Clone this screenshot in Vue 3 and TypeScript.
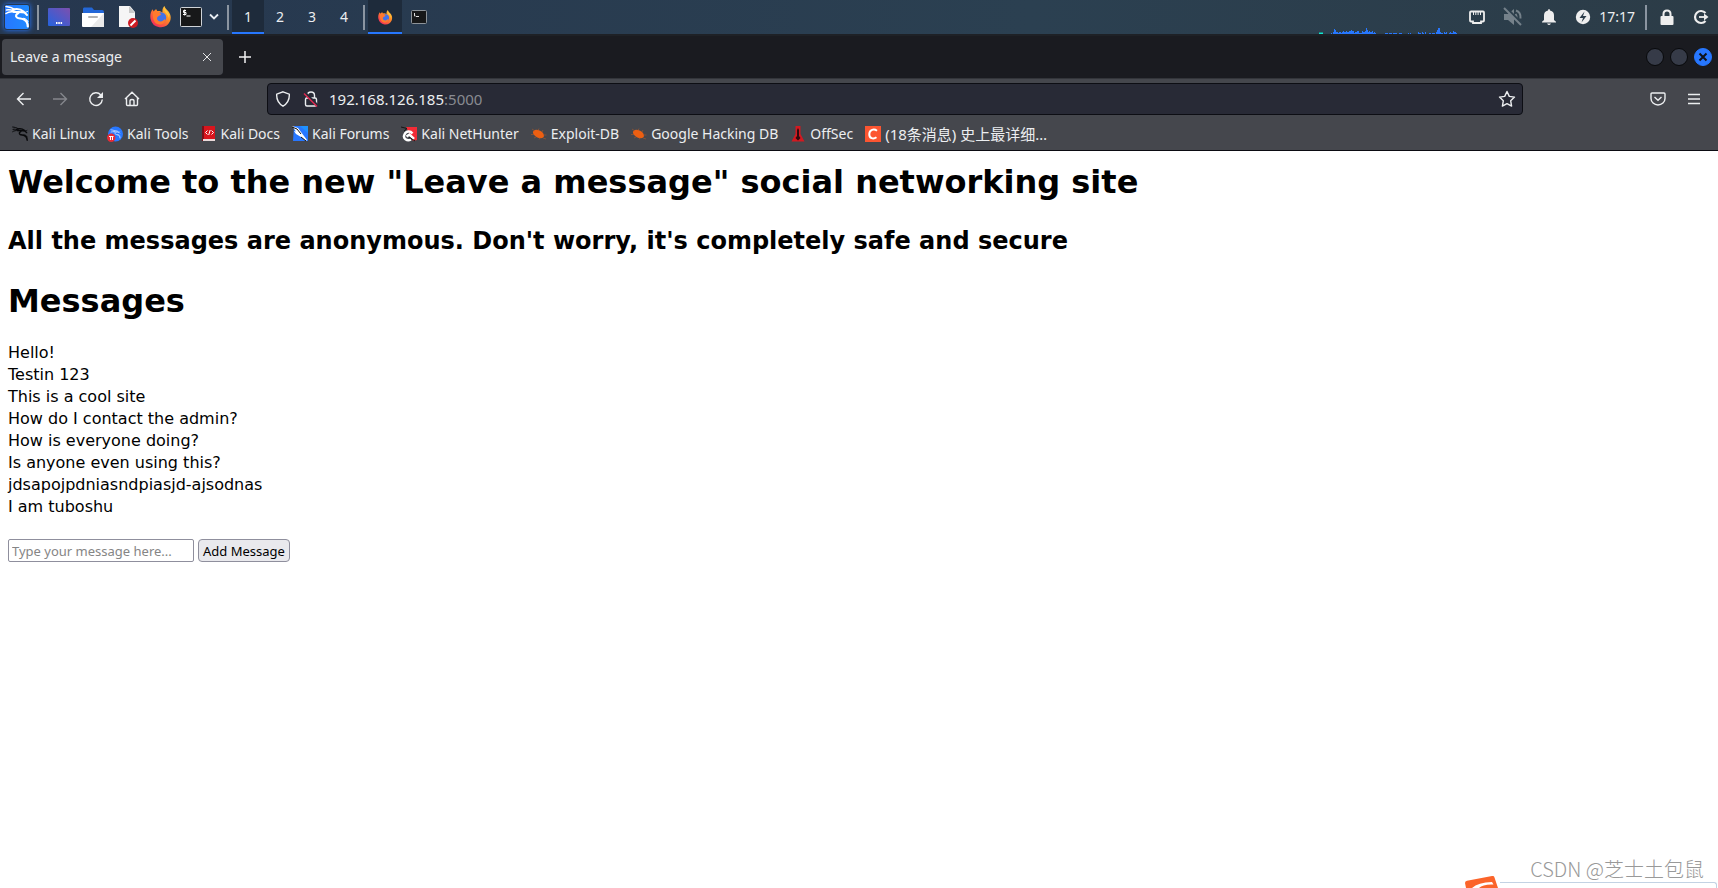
<script setup lang="ts">
import { ref } from 'vue'

interface Bookmark {
  label: string
  icon: string
}

const workspaces = [1, 2, 3, 4]
const activeWorkspace = ref(1)

const bookmarks: Bookmark[] = [
  { label: 'Kali Linux', icon: 'dragon' },
  { label: 'Kali Tools', icon: 'tools' },
  { label: 'Kali Docs', icon: 'docs' },
  { label: 'Kali Forums', icon: 'forums' },
  { label: 'Kali NetHunter', icon: 'nethunter' },
  { label: 'Exploit-DB', icon: 'bug' },
  { label: 'Google Hacking DB', icon: 'bug' },
  { label: 'OffSec', icon: 'offsec' },
  { label: '(18条消息) 史上最详细…', icon: 'csdn' },
]

const messages = ref<string[]>([
  'Hello!',
  'Testin 123',
  'This is a cool site',
  'How do I contact the admin?',
  'How is everyone doing?',
  'Is anyone even using this?',
  'jdsapojpdniasndpiasjd-ajsodnas',
  'I am tuboshu',
])
const draft = ref('')

function addMessage(): void {
  const text = draft.value.trim()
  if (!text) return
  messages.value.push(text)
  draft.value = ''
}

const cpuLoad = [1, 0, 2, 5, 4, 2, 2, 1, 2, 2, 1, 2, 3, 2, 2, 3, 2, 2, 3, 3, 4, 3, 3, 1, 2, 2, 3, 3, 1, 1, 1, 3, 2, 2, 3, 6, 4, 2, 3, 2, 2, 3, 1, 2, 1, 0, 0, 0, 0, 0, 0, 0, 0, 0, 1, 1, 1, 0, 1, 1, 1, 0, 1, 1, 1, 1, 0, 0, 1, 1, 1, 0, 0, 0, 0, 0, 0, 1, 0, 1, 0, 0, 0, 0, 0, 0, 0, 2, 1, 1, 0, 2, 1, 0, 2, 0, 0, 0, 1, 1, 0, 1, 1, 1, 0, 2, 4, 6, 6, 2, 1, 1, 0, 2, 1, 2, 0, 0, 1, 2, 1, 1, 3, 2, 2, 1]
</script>

<template>
  <div class="desktop">
    <svg class="defs" width="0" height="0" aria-hidden="true">
      <defs>
        <linearGradient id="kaliBlue" x1="0" y1="0" x2="1" y2="0"><stop stop-color="#2777ff" /><stop offset="1" stop-color="#1f8bff" /></linearGradient>
        <linearGradient id="deskGrad" x1="0" y1="1" x2="1" y2="0"><stop stop-color="#2463e0" /><stop offset="1" stop-color="#7d4fae" /></linearGradient>
        <linearGradient id="foxGrad" x1="1" y1="0" x2="0.2" y2="1"><stop stop-color="#ffe14a" /><stop offset="0.45" stop-color="#ff8a24" /><stop offset="1" stop-color="#f4265f" /></linearGradient>
        <symbol id="dragon" viewBox="0 0 24 24">
          <g fill="none" stroke="currentColor" stroke-linecap="round" stroke-linejoin="round">
            <path stroke-width="1.500" d="M1 1.500c3 .2 6 1 9 3M1.500 5c3-.6 5 0 7.500 1M1 8.500C3 7 6 6.500 9 7" />
            <path stroke-width="2" d="M8 4.500c4-.8 8-.3 10.500 2L22 10M9 7c4 0 7-.5 10.500.5" />
            <path stroke-width="2.200" d="M13.500 8c-2.500 1-3.200 3-1.500 4.500 1.500 1.200 4 .8 6.500 1.800 3 1.200 4.200 3.500 4.300 7.200" />
            <path stroke-width="1" d="M20 7.500l2.500-1M17 13.500c2.500-.8 4.500.5 6 3" />
          </g>
        </symbol>
        <symbol id="firefox" viewBox="0 0 22 22">
          <path fill="url(#foxGrad)" d="M14.500 0c.5 2.500 2 3.300 4 5.500 2.300 2.700 2.800 6.600 1.500 9.800A10.300 10.300 0 0 1 .6 13C-.1 9.500.5 6 2.700 3.200l.8 2.300c1-.8 1.600-1.900 2.800-2.200L7.200 5c2.700-.3 4 .3 5.300 1.500-.3-3 .3-5 2-6.500z" />
          <circle cx="11" cy="11.500" r="5.200" fill="#4272e8" />
          <path fill="#ff792e" d="M3 6c3-1 5.500-.5 7.800 2 1 .8-1.800 1.600-3 2.700-1.600 1.500-.4 4 1.600 4.500 2.500.7 4.500-.8 5.500-2.200 1 2.500-1.500 5.600-5 5.600C5 18.500 2 14 3 6z" />
          <path fill="#ffc83d" d="M14.500 1c.5 4 5.500 5.500 4.500 11-.4-2-1.300-3-2.500-4.500C15 5.500 13.500 4 14.500 1z" />
        </symbol>
      </defs>
    </svg>

    <header class="panel">
      <div class="panel-left">
        <button class="menu-btn" aria-label="Applications">
          <svg width="26" height="26" viewBox="0 0 26 26"><rect x="1" y="1" width="24" height="24" rx="2" fill="url(#kaliBlue)" /><use href="#dragon" x="1" y="1" width="24" height="24" color="#fff" /></svg>
        </button>
        <i class="sep"></i>
        <div class="launchers">
          <button aria-label="Show desktop"><svg width="22" height="22"><rect y="2" width="22" height="18" rx="1" fill="url(#deskGrad)" /><path stroke="#fff" stroke-width="2" stroke-dasharray="1.500 .8" d="M8 17h6.500" /></svg></button>
          <button aria-label="Files"><svg width="22" height="22"><path fill="#2367d8" d="M2 1.500h8l2 2.500h8q2 0 2 2v4H1V3q0-1.500 1-1.500z" /><path fill="#fff" d="M0 7h22v13q0 1-1 1H1q-1 0-1-1z" /><path fill="#eaeaea" d="M22 7v14H9z" /><path stroke="#b3b3b3" stroke-width="2" stroke-linecap="round" d="M7 11h8" /></svg></button>
          <button aria-label="Text editor"><svg width="22" height="22"><path fill="#f5f5f5" d="M3 0h11l5 6v15H3z" /><path fill="#c9c9c9" d="M13 0l6 7h-6z" /><circle cx="17" cy="17" r="5" fill="#cd1c24" /><path stroke="#fff" stroke-width="2" d="M14.500 19.500l5-5" /></svg></button>
          <button aria-label="Firefox"><svg width="22" height="22"><use href="#firefox" width="22" height="22" /></svg></button>
        </div>
        <div class="terminal">
          <button aria-label="Terminal"><svg width="22" height="22"><rect x=".5" y="1.500" width="21" height="19" rx="1" fill="#171819" stroke="#cfd3d8" /><path fill="none" stroke="#fff" d="M6 4.500H3.500v2H6v2H3M4.700 3.500v6M6.500 10h4" /></svg></button>
          <button aria-label="More terminals"><svg width="10" height="8"><path d="M1 1.500l4 4 4-4" fill="none" stroke="#e8edf2" stroke-width="1.800" /></svg></button>
        </div>
        <i class="sep"></i>
        <nav class="spaces" aria-label="Workspaces">
          <button v-for="n in workspaces" :key="n" :class="{ active: n === activeWorkspace }" @click="activeWorkspace = n">{{ n }}</button>
        </nav>
        <i class="sep"></i>
        <div class="tasks">
          <button class="active" aria-label="Firefox window"><svg width="15" height="15"><use href="#firefox" width="15" height="15" /></svg></button>
          <button aria-label="Terminal window"><svg width="16" height="14"><rect x=".5" y=".5" width="15" height="13" rx="1" fill="#171819" stroke="#8d9399" /><path fill="none" stroke="#dedede" d="M3.500 3v3h1M5 6.500h3" /></svg></button>
        </div>
      </div>
      <div class="panel-right">
        <svg class="graph" width="140" height="8" viewBox="0 0 140 8" shape-rendering="crispEdges">
          <rect y="6" width="4" height="1" fill="#1b8c86" /><rect y="7" width="4" height="1" fill="#12e8d0" />
          <rect v-for="(v, i) in cpuLoad" :key="i" :x="12 + i" :y="8 - v" width="1" :height="v" fill="#2777ff" />
        </svg>
        <button aria-label="Network"><svg width="16" height="16"><path d="M2 2.500h12q1 0 1 1v8q0 1-1 1h-2v1.500H4v-1.500H2q-1 0-1-1v-8q0-1 1-1z" fill="none" stroke="#eee" stroke-width="1.800" /><path d="M4.500 3v3M6.800 3v3M9.100 3v3M11.500 3v3" stroke="#eee" /></svg></button>
        <button aria-label="Volume muted"><svg width="20" height="20" stroke="#75818a" fill="none" stroke-width="2"><path fill="#75818a" stroke="none" d="M1 7h4l6-5v16l-6-5H1z" /><path d="M12.500 7q2 3 0 6M13 3.500q5 1.500 4.500 8" /><path stroke="#2d3f4d" stroke-width="3" d="M2 0l18 18" /><path d="M1 1l17 17" /></svg></button>
        <button aria-label="Notifications"><svg width="16" height="16"><path fill="#eee" d="M8 0q1 0 1 1.500c3 .7 4 2.500 4 5V11l2 1.800V13.500H1V12.800L3 11V6.500c0-2.500 1-4.300 4-5Q7 0 8 0zM6 14.500h4Q8 17.500 6 14.500z" /></svg></button>
        <button aria-label="Power"><svg width="16" height="16"><circle cx="8" cy="8" r="7.200" fill="#eee" /><path fill="#2d3d4a" d="M9.500 2.500L4.500 9H8l-1.500 4.500 5-6.500H8z" /></svg></button>
        <time class="clock">17:17</time>
        <i class="sep"></i>
        <button aria-label="Lock screen"><svg width="16" height="16"><rect x="1.500" y="7" width="13" height="9" rx="1" fill="#eee" /><path d="M4.500 8V5q0-3.500 3.500-3.500T11.500 5v3" fill="none" stroke="#eee" stroke-width="2" /></svg></button>
        <button aria-label="Log out"><svg width="16" height="16" fill="none" stroke="#eee" stroke-width="2.200"><path d="M12.500 4A6 6 0 1 0 12.500 12" /><path stroke-width="1.800" d="M6 8h6" /><path fill="#eee" stroke="none" d="M11 4.500L15.500 8 11 11.500z" /></svg></button>
      </div>
    </header>

    <div class="tabbar">
      <div class="tab"><span>Leave a message</span><button aria-label="Close tab"><svg width="10" height="10"><path d="M1 1l8 8M9 1L1 9" stroke="#e3e4e6" /></svg></button></div>
      <button class="newtab" aria-label="New tab"><svg width="14" height="14"><path d="M7 1v12M1 7h12" stroke="#f2f2f2" stroke-width="1.500" /></svg></button>
      <div class="window-btns">
        <button aria-label="Minimize"></button><button aria-label="Maximize"></button>
        <button class="close" aria-label="Close"><svg width="10" height="10"><path d="M1.500 1.500l7 7M8.500 1.500l-7 7" stroke="#10131a" stroke-width="2" /></svg></button>
      </div>
    </div>

    <div class="chrome">
      <div class="navbar">
        <div class="nav-btns">
          <button aria-label="Back"><svg class="line" width="16" height="16"><path d="M15 8H2M7.500 2L1.500 8l6 6" /></svg></button>
          <button class="dim" aria-label="Forward"><svg class="line" width="16" height="16"><path d="M1 8h13M8.500 2l6 6-6 6" /></svg></button>
          <button aria-label="Reload"><svg class="line" width="16" height="16"><path d="M12.800 4A6.300 6.300 0 1 0 14.300 8.500" /><path fill="currentColor" stroke="none" d="M15 1v6H9z" /></svg></button>
          <button aria-label="Home"><svg class="line" width="16" height="16"><path d="M1 8l7-6.700L15 8M2.500 7v6.500q0 1 1 1h9q1 0 1-1V7M6 14V10q0-1.500 2-1.500T10 10v4" /></svg></button>
        </div>
        <div class="urlbar">
          <svg class="line" width="16" height="16"><path d="M8 .8l6.300 2.400c.3 5-1.500 9-6.300 12C3.200 12.200 1.400 8.200 1.700 3.200z" /></svg>
          <svg class="line" width="16" height="16"><path d="M4.500 7V4.500Q4.500 1 8 1t3.500 3.500V7" /><rect x="2.500" y="7" width="11" height="8" rx="1.500" /><path stroke="#282a36" stroke-width="3" d="M2 2l13 13" /><path stroke="#e22850" d="M1 2.500L14 15.500" /></svg>
          <span class="url">192.168.126.185<em>:5000</em></span>
          <button aria-label="Bookmark page"><svg class="line" width="18" height="18"><path stroke-linejoin="round" d="M9 1.500l2.300 4.900 5.200.7-3.800 3.700.9 5.300L9 13.600l-4.600 2.500.9-5.300L1.500 7.100l5.200-.7z" /></svg></button>
        </div>
        <div class="nav-end">
          <button aria-label="Pocket"><svg class="line" width="16" height="16"><path d="M2 2h12q1 0 1 1v4.500a7 6.500 0 0 1-14 0V3q0-1 1-1z" /><path d="M4.500 6L8 9.300 11.500 6" /></svg></button>
          <button aria-label="Menu"><svg class="line" width="14" height="14"><path d="M1 2.500h12M1 7h12M1 11.500h12" /></svg></button>
        </div>
      </div>
      <nav class="bookmarks" aria-label="Bookmarks">
        <a v-for="b in bookmarks" :key="b.label" href="#" :class="b.icon">
          <svg width="16" height="16" viewBox="0 0 16 16">
            <use v-if="b.icon === 'dragon'" href="#dragon" width="16" height="16" color="#08090b" />
            <template v-else-if="b.icon === 'tools'"><circle cx="8.500" cy="8" r="7.500" fill="#2777ff" /><use href="#dragon" x="3" y="3" width="11" height="10" color="#c9dcff" /><circle cx="4.200" cy="11.800" r="4.200" fill="#e52b36" /><path stroke="#fff" fill="none" d="M2 10.500h4.500M3.500 10.500v3.500M5.500 10.500v3.500" /></template>
            <template v-else-if="b.icon === 'docs'"><path fill="#7c1018" d="M1 0h2v15H1z" /><path fill="#d9151d" d="M3 0h11v13H3z" /><path fill="#e9d9da" d="M2 13h12v2H2z" /><path stroke="#fff" fill="none" d="M6.500 4.500L4.500 6.500l2 2M10.500 4.500l2 2-2 2M9.200 4l-1.500 5" /></template>
            <template v-else-if="b.icon === 'forums'"><path fill="#2777ff" d="M2 0h14v15H1z" /><path fill="#1f92ff" d="M8 0h8v7z" /><path fill="#fff" d="M0 0l6 2 3 4 6 8-1 1-5-4-5-3-2-3 2 .5z" /><path stroke="#111" fill="none" d="M0 1l5 2 4 5M9 11l5 4" /></template>
            <template v-else-if="b.icon === 'nethunter'"><path fill="#f22b36" d="M5 1h11v13l-4 1z" /><path fill="none" stroke="#fff" stroke-width="2.500" d="M13 13L8.500 8.500 5.500 10.500M10 13.500c-4 2-8.500-1-6.500-5s6-3.500 8-1" /><path stroke="#151515" fill="none" d="M0 1l6 1.500L3 5M8 11l6 4" /></template>
            <template v-else-if="b.icon === 'bug'"><ellipse cx="7.500" cy="8" rx="6" ry="3.600" transform="rotate(28 7.500 8)" fill="#ec5f12" /><path stroke="#a8592c" stroke-width=".6" fill="none" d="M1 3l3 2M0 8.500h3M3 12l2-1M8 2.500l-1 2M12 4l-1 2M15.500 9H12M15 13l-3-1M8 13.500l1-2" /></template>
            <template v-else-if="b.icon === 'offsec'"><path fill="#d31920" d="M5.500 0h5v8l4 7.500h-13l4-7.500z" /><path fill="#310a0d" d="M7 4l1-2 1 2v6l1.500 2L8 14.500 5.500 12 7 10z" /></template>
            <template v-else><path fill="#fc5531" d="M0 0h16v16H0z" /><path fill="none" stroke="#fff" stroke-width="2" d="M12 4.800C9 2.500 4.500 3.500 4.300 8s4 5.500 7.200 3.300" /></template>
          </svg>
          <span>{{ b.label }}</span>
        </a>
      </nav>
    </div>

    <main class="page">
      <h1>Welcome to the new "Leave a message" social networking site</h1>
      <h2>All the messages are anonymous. Don't worry, it's completely safe and secure</h2>
      <h1>Messages</h1>
      <div class="messages"><div v-for="(m, i) in messages" :key="i">{{ m }}</div></div>
      <form @submit.prevent="addMessage">
        <input v-model="draft" type="text" aria-label="Message" placeholder="Type your message here..." />
        <button type="submit">Add Message</button>
      </form>
      <div class="watermark">CSDN @芝士土包鼠</div>
      <div class="popup">
        <svg width="36" height="12"><path fill="#fb642a" d="M1 7q0-2 2-2.300L28 0q2-.4 2.500 1.500L34 12H2z" /><path fill="#fff" d="M8 12q6-5.500 20-6l1.500 2.500Q19 8 15 12z" /></svg>
        <i></i>
      </div>
    </main>
  </div>
</template>

<style>
body {
  margin: 0;
}
</style>

<style scoped>
.desktop {
  position: relative;
  display: flex;
  flex-direction: column;
  min-height: 100vh;
  overflow: hidden;
  background: #fff;
  font: 15px/20px "Noto Sans", "Noto Sans CJK SC", sans-serif;
  color: #eceef0;
}
.defs { position: absolute; }
button {
  padding: 0;
  border: 0;
  background: none;
  color: inherit;
  font: inherit;
}
svg { display: block; flex: none; }
.line {
  fill: none;
  stroke: currentColor;
  stroke-width: 1.4;
}
.panel {
  display: flex;
  justify-content: space-between;
  height: 34px;
  background: linear-gradient(90deg, #26374f, #2b4051 60%, #2c3c47);
  border-bottom: 2px solid #1e2126;
}
.panel-left, .panel-right, .launchers, .terminal, .spaces, .tasks {
  display: flex;
  align-items: center;
}
.panel-left { padding-left: 4px; }
.menu-btn { box-shadow: 0 0 5px #2777ff; border-radius: 3px; }
.sep {
  width: 2px;
  height: 25px;
  background: #8b95a1;
}
.menu-btn + .sep { margin: 0 9px 0 7px; }
.launchers { gap: 12px; }
.terminal { gap: 7px; margin: 0 8px; }
.spaces { margin: 0 3px; align-self: stretch; }
.spaces button {
  width: 32px;
  height: 34px;
  font-size: 14px;
}
.spaces .active, .tasks .active {
  background: #1e2b3b;
  box-shadow: inset 0 -2px #2777ff;
}
.tasks { margin-left: 3px; align-self: stretch; }
.tasks button {
  display: grid;
  place-items: center;
  width: 34px;
  height: 34px;
}
.panel-right { padding-right: 9px; gap: 18px; }
.graph { align-self: flex-end; margin-right: -8px; }
.panel-right .clock { font-size: 14px; margin: 0 -8px 0 -10px; }
.panel-right .sep { margin-right: -6px; }
.tabbar {
  display: flex;
  align-items: center;
  height: 42px;
  padding: 0 6px 0 2px;
  background: #1a1b20;
}
.tab {
  box-sizing: border-box;
  display: flex;
  align-items: center;
  justify-content: space-between;
  width: 221px;
  height: 36px;
  padding: 0 11px 0 8px;
  border-radius: 4px;
  background: #45474d;
  font-size: 14px;
}
.newtab { margin-left: 15px; }
.window-btns {
  display: flex;
  gap: 6px;
  margin-left: auto;
}
.window-btns button {
  box-sizing: border-box;
  display: grid;
  place-items: center;
  width: 18px;
  height: 18px;
  border: 1px solid #08090b;
  border-radius: 50%;
  background: #363b48;
}
.window-btns .close { background: #2777ff; border-color: #2777ff; }
.chrome {
  background: #45474d;
  border-bottom: 1px solid #0b0b12;
  border-top: 1px solid #33353a;
}
.navbar {
  display: flex;
  align-items: center;
  height: 39px;
  padding: 0 17px 0 16px;
}
.nav-btns { display: flex; gap: 20px; width: 251px; flex: none; }
.dim { color: #85878c; }
.urlbar {
  box-sizing: border-box;
  display: flex;
  flex: 1;
  align-items: center;
  gap: 12px;
  height: 32px;
  padding: 0 6px 0 7px;
  border: 1px solid #0d0e14;
  border-radius: 4px;
  background: #282a36;
}
.url { flex: 1; margin-left: -2px; }
.url em { font-style: normal; color: #888a91; }
.nav-end {
  display: flex;
  align-items: center;
  justify-content: flex-end;
  gap: 21px;
  width: 178px;
  flex: none;
}
.bookmarks {
  display: flex;
  align-items: center;
  gap: 12px;
  height: 32px;
  padding: 0 12px;
  white-space: nowrap;
  font-size: 14px;
}
.bookmarks a {
  display: flex;
  align-items: center;
  gap: 4px;
  color: inherit;
  text-decoration: none;
}
.bookmarks .csdn { font-size: 15px; }
.page {
  position: relative;
  flex: 1;
  padding: 11px 8px;
  color: #000;
  font: 16px/22px "DejaVu Sans", sans-serif;
}
h1 { margin: 0 0 21px; font-size: 32px; line-height: 40px; }
h2 { margin: 0 0 22px; font-size: 24px; line-height: 36px; }
form {
  display: flex;
  gap: 4px;
  margin-top: 21px;
}
form input, form button {
  box-sizing: border-box;
  height: 23px;
  border: 1px solid #8f8f9d;
  font: 13px/18px "Noto Sans", sans-serif;
}
form input {
  width: 186px;
  padding: 0 3px;
  border-radius: 2px;
  background: #fff;
}
form input::placeholder { color: #858585; opacity: 1; }
form button {
  padding: 0 4px;
  border-radius: 4px;
  background: #e9e9ed;
  color: #000;
}
.watermark {
  position: absolute;
  right: 14px;
  bottom: 5px;
  color: #999;
  font: 300 20px/28px "Noto Sans CJK SC", sans-serif;
}
.popup {
  position: absolute;
  right: 1px;
  bottom: 0;
  display: flex;
  align-items: flex-end;
}
.popup i {
  width: 216px;
  height: 5px;
  border: solid #c3d2e3;
  border-width: 1px 1px 0 0;
  border-top-right-radius: 3px;
}
</style>
